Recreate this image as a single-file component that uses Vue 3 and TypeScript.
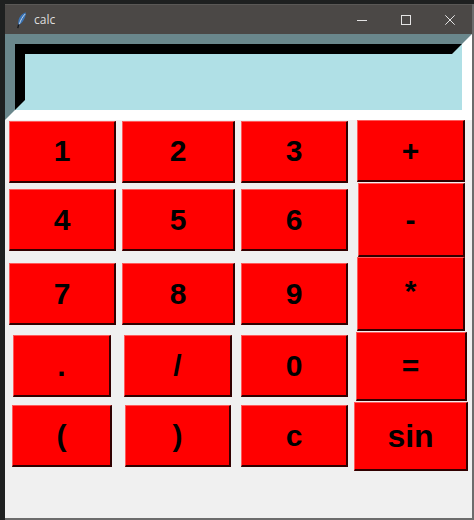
<script setup lang="ts">
interface Key {
  label: string
  cls: string
}

const keys: Key[] = [
  { label: '1', cls: 'w107 h62' },
  { label: '2', cls: 'w113 h62' },
  { label: '3', cls: 'w107 h62' },
  { label: '+', cls: 'w108 h62 top' },
  { label: '4', cls: 'w107 h62' },
  { label: '5', cls: 'w113 h62' },
  { label: '6', cls: 'w107 h62' },
  { label: '-', cls: 'w107 h74' },
  { label: '7', cls: 'w107 h62' },
  { label: '8', cls: 'w113 h62' },
  { label: '9', cls: 'w107 h62' },
  { label: '*', cls: 'w108 h74 raise' },
  { label: '.', cls: 'w98 h62 nudge' },
  { label: '/', cls: 'w108 h62 nudge' },
  { label: '0', cls: 'w107 h62' },
  { label: '=', cls: 'w111 h69' },
  { label: '(', cls: 'w100 h62 nudge' },
  { label: ')', cls: 'w106 h62 nudge' },
  { label: 'c', cls: 'w107 h62' },
  { label: 'sin', cls: 'w114 h69 big' },
]
</script>

<template>
  <div class="desktop">
    <div class="window">
      <header class="titlebar">
        <svg class="feather" viewBox="0 0 12 20" width="12" height="20" aria-hidden="true">
          <path d="M10 2.6C6.4 3.2 3.2 6.6 2.4 11c-.3 1.6-.2 3 .2 3.9C6.2 13.6 9.4 9 10 2.6Z" fill="#3a74b6" />
          <path d="M9.2 4C6.8 6.4 4.6 10 3.4 14" fill="none" stroke="#bcd4ee" stroke-width="1" />
          <path d="M2.6 14.6 1.8 18.2" fill="none" stroke="#14171b" stroke-width="1.3" />
        </svg>
        <span class="title">calc</span>
        <div class="controls">
          <span class="control">
            <svg viewBox="0 0 10 10" width="10" height="10" aria-hidden="true">
              <path d="M0 5.5H10" stroke="#e4e4e4" stroke-width="1" fill="none" />
            </svg>
          </span>
          <span class="control">
            <svg viewBox="0 0 10 10" width="10" height="10" aria-hidden="true">
              <rect x="0.5" y="0.5" width="9" height="9" stroke="#e4e4e4" stroke-width="1" fill="none" />
            </svg>
          </span>
          <span class="control">
            <svg viewBox="0 0 10 10" width="10" height="10" aria-hidden="true">
              <path d="M0.3 0.3 9.7 9.7M9.7 0.3 0.3 9.7" stroke="#e4e4e4" stroke-width="1" fill="none" />
            </svg>
          </span>
        </div>
      </header>
      <main class="content">
        <div class="entry-outer">
          <div class="entry-inner">
            <div class="entry-field"></div>
          </div>
        </div>
        <div class="pad">
          <button v-for="k in keys" :key="k.label" type="button" class="key" :class="k.cls">{{ k.label }}</button>
        </div>
      </main>
    </div>
  </div>
</template>

<style scoped>
.desktop {
  width: 474px;
  height: 520px;
  box-sizing: border-box;
  padding: 4px 0 0 5px;
  background: #1e2020;
  overflow: hidden;
}
.window {
  width: 469px;
  height: 516px;
  box-sizing: border-box;
  border-right: 2px solid #6c6c6c;
  border-bottom: 2px solid #6c6c6c;
  display: flex;
  flex-direction: column;
}
.titlebar {
  height: 30px;
  flex: none;
  background: #4b4846;
  border-top: 1px solid #5a5856;
  box-sizing: border-box;
  display: flex;
  align-items: center;
  color: #dedede;
}
.feather {
  margin-left: 11px;
  flex: none;
}
.title {
  margin-left: 6px;
  font-size: 12px;
  line-height: 16px;
  font-family: "Open Sans", sans-serif;
}
.controls {
  margin-left: auto;
  display: flex;
  align-items: center;
  gap: 34px;
  padding-right: 17px;
}
.control {
  display: flex;
  width: 10px;
  height: 10px;
}
.content {
  flex: 1;
  background: #f0f0f0;
  min-height: 0;
}
.entry-outer {
  height: 86px;
  box-sizing: border-box;
  border: 10px solid;
  border-color: #6a878c #ffffff #ffffff #6a878c;
}
.entry-inner {
  height: 100%;
  box-sizing: border-box;
  border: 10px solid;
  border-color: #000000 #b0e0e6 #b0e0e6 #000000;
}
.entry-field {
  height: 100%;
  background: #b0e0e6;
}
.pad {
  display: grid;
  grid-template-columns: 115px 117px 115px 118px;
  grid-template-rows: 63px 74px 74px 70px 70px;
  place-items: center;
}
.key {
  box-sizing: border-box;
  margin: 0;
  padding: 0;
  display: flex;
  align-items: center;
  justify-content: center;
  background: #ff0000;
  color: #000000;
  border-style: solid;
  border-width: 1px 2px 2px 1px;
  border-color: #ff5a5a #300000 #300000 #ff5a5a;
  font-family: "Liberation Sans", Arial, sans-serif;
  font-weight: 700;
  font-size: 30px;
  line-height: 1;
}
.big {
  font-size: 32px;
}
.raise {
  padding-bottom: 6px;
}
.top {
  align-self: start;
}
.nudge {
  margin-right: 1px;
}
.w98 { width: 98px; }
.w100 { width: 100px; }
.w106 { width: 106px; }
.w107 { width: 107px; }
.w108 { width: 108px; }
.w111 { width: 111px; }
.w113 { width: 113px; }
.w114 { width: 114px; }
.h62 { height: 62px; }
.h69 { height: 69px; }
.h74 { height: 74px; }
</style>
